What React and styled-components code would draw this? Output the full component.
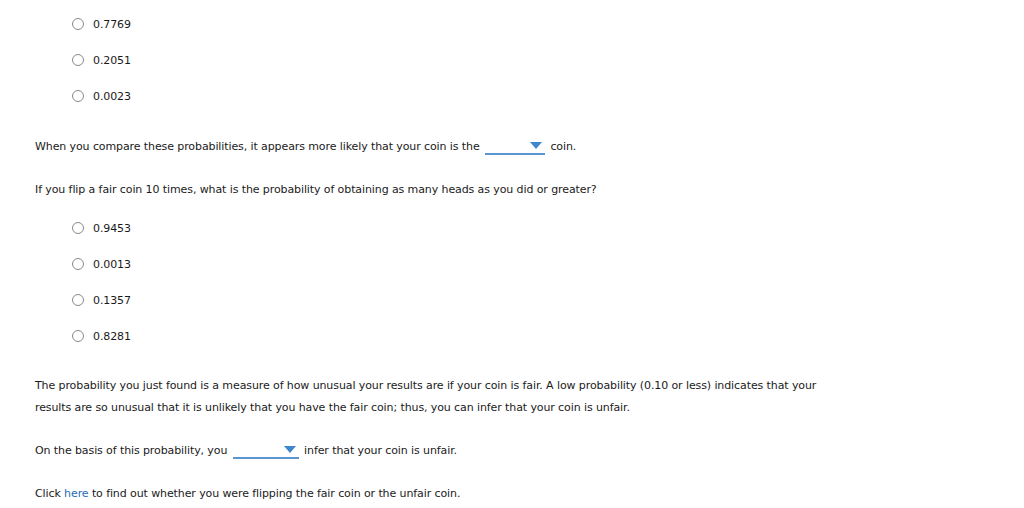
import React from "react";
import styled, { createGlobalStyle } from "styled-components";

const Global = createGlobalStyle`
  html, body { margin: 0; padding: 0; background: #fff; }
  body { font-family: Verdana, "DejaVu Sans", sans-serif; font-size: 11px; letter-spacing: -0.1px; color: #1a1a1a; }
`;

const Page = styled.div`
  padding: 7px 0 0 35px;
  width: 1024px;
  height: 508px;
  box-sizing: border-box;
  overflow: hidden;
`;

const Options = styled.div`
  display: flex;
  flex-direction: column;
  padding-left: 37px;
  margin-top: ${(p) => p.$top || 0}px;
`;

const OptionRow = styled.label`
  display: flex;
  align-items: center;
  box-sizing: border-box;
  height: 36px;
  padding-bottom: 2px;
  gap: 9px;
`;

const Radio = styled.span`
  width: 10px;
  height: 10px;
  border: 1px solid #8a8a8a;
  border-radius: 50%;
  background: #fff;
  flex: none;
`;

const Para = styled.p`
  margin: ${(p) => p.$top || 0}px 0 0 0;
  line-height: 22px;
  max-width: 800px;
`;

const DropWrap = styled.span`
  display: inline-block;
  position: relative;
  width: ${(p) => p.$w}px;
  height: 14px;
  border-bottom: 2px solid #5a95cf;
  vertical-align: -5px;
  margin: 0 2px;
`;

const Caret = styled.span`
  position: absolute;
  right: 3px;
  top: 3px;
  width: 0;
  height: 0;
  border-left: 6px solid transparent;
  border-right: 6px solid transparent;
  border-top: 7px solid #3f87cc;
`;

const Link = styled.a`
  color: #1f6db5;
  text-decoration: none;
`;

const Dropdown = ({ w }) => (
  <DropWrap $w={w}>
    <Caret />
  </DropWrap>
);

const OptionList = ({ items, top }) => (
  <Options $top={top}>
    {items.map((v) => (
      <OptionRow key={v}>
        <Radio />
        <span>{v}</span>
      </OptionRow>
    ))}
  </Options>
);

export default function App() {
  return (
    <>
      <Global />
      <Page>
        <OptionList items={["0.7769", "0.2051", "0.0023"]} />
        <Para $top={21}>
          When you compare these probabilities, it appears more likely that your coin is the <Dropdown w={60} /> coin.
        </Para>
        <Para $top={21}>
          If you flip a fair coin 10 times, what is the probability of obtaining as many heads as you did or greater?
        </Para>
        <OptionList top={10} items={["0.9453", "0.0013", "0.1357", "0.8281"]} />
        <Para $top={20}>
          The probability you just found is a measure of how unusual your results are if your coin is fair. A low probability (0.10 or less) indicates that your results are so unusual that it is unlikely that you have the fair coin; thus, you can infer that your coin is unfair.
        </Para>
        <Para $top={21}>
          On the basis of this probability, you <Dropdown w={66} /> infer that your coin is unfair.
        </Para>
        <Para $top={21}>
          Click <Link href="#">here</Link> to find out whether you were flipping the fair coin or the unfair coin.
        </Para>
      </Page>
    </>
  );
}
